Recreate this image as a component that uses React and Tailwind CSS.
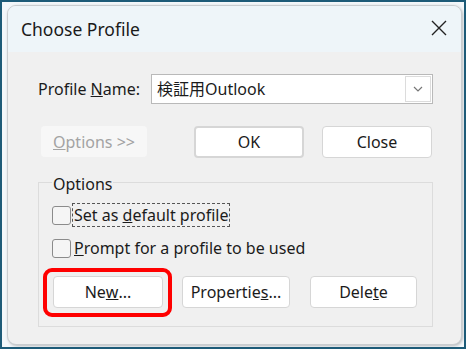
const font = { fontFamily: '"Noto Sans", "Noto Sans CJK JP", sans-serif' }

function Btn({ children, className = '' }) {
  return (
    <div
      className={`flex h-[32px] shrink-0 items-center justify-center rounded-[4px] border border-[#d6d6d6] bg-white text-[16px] text-[#1b1b1b] ${className}`}
    >
      {children}
    </div>
  )
}

function Check({ children, focused }) {
  return (
    <div className="flex h-[22px] items-center">
      <span className="h-[19px] w-[19px] rounded-[3px] border-[1.5px] border-[#8b8b8b] bg-[#f5f5f5]"></span>
      <span
        className={`ml-[2px] px-[1px] text-[16px] leading-[22px] text-[#1b1b1b] ${
          focused ? 'outline outline-1 outline-dashed outline-[#555]' : ''
        }`}
      >
        {children}
      </span>
    </div>
  )
}

export default function App() {
  return (
    <div
      className="h-[349px] w-[466px] overflow-hidden border-2 border-[#1d5b78] bg-[#f3f7fa] pl-[5px] pt-[3px]"
      style={font}
    >
      <div className="h-[340px] w-[455px] overflow-hidden rounded-[9px] border border-[#c9cdd0] bg-[#f0f0f0] shadow-[1px_1px_3px_rgba(0,0,0,0.25)]">
        {/* title bar */}
        <div className="flex h-[46px] items-center justify-between bg-[#eef5f9] pl-[13px] pr-[14px]">
          <span className="text-[17.5px] text-[#1a1a1a]">Choose Profile</span>
          <svg width="16" height="16" viewBox="0 0 16 16" className="mt-[-2px]">
            <path d="M1 1L15 15M15 1L1 15" stroke="#222" strokeWidth="1.4" />
          </svg>
        </div>

        <div className="pl-[30px] pt-[22px]">
          {/* profile name */}
          <div className="flex h-[30px] items-center">
            <span className="w-[113px] text-[16px] text-[#1b1b1b]">
              Profile <u>N</u>ame:
            </span>
            <div className="flex h-[30px] w-[282px] items-center justify-between border border-[#b9b9b9] bg-white pl-[5px] pr-[1px]">
              <span className="text-[16px] text-[#1b1b1b]">検証用Outlook</span>
              <div className="flex h-[26px] w-[26px] items-center justify-center border border-[#dcdcdc] bg-white">
                <svg width="10" height="6" viewBox="0 0 10 6">
                  <path d="M1 1L5 5L9 1" stroke="#777" strokeWidth="1.2" fill="none" />
                </svg>
              </div>
            </div>
          </div>

          {/* action buttons */}
          <div className="mt-[22px] flex h-[32px]">
            <div className="ml-[3px] flex h-[31px] w-[106px] items-center justify-center rounded-[4px] bg-[#f7f7f7] text-[16px] text-[#a3a3a3]">
              <u>O</u>ptions &gt;&gt;
            </div>
            <Btn className="ml-[47px] w-[110px] border-2 border-[#6ea7dc]">OK</Btn>
            <Btn className="ml-[18px] w-[110px]">Close</Btn>
          </div>

          {/* group box */}
          <div className="mt-[24px] h-[145px] w-[395px] border border-[#dcdcdc] pl-[13px]">
            <div className="-mt-[9px] w-fit bg-[#f0f0f0] px-[1px] text-[16px] leading-[20px] text-[#1b1b1b]">
              Options
            </div>
            <div className="mt-[10px] flex flex-col gap-[11px]">
              <Check focused>
                Set as <u>d</u>efault profile
              </Check>
              <Check>
                <u>P</u>rompt for a profile to be used
              </Check>
            </div>
            <div className="mt-[9px] flex items-start">
              <div className="-ml-[9px] shrink-0 rounded-[9px] border-4 border-[#ff0000] pb-[5px] pl-[6px] pr-[5px] pt-[4px]">
                <Btn className="w-[110px]">
                  Ne<u>w</u>...
                </Btn>
              </div>
              <Btn className="ml-[10px] mt-[8px] w-[108px]">
                Propertie<u>s</u>...
              </Btn>
              <Btn className="ml-[20px] mt-[8px] w-[107px]">
                Dele<u>t</u>e
              </Btn>
            </div>
          </div>
        </div>
      </div>
    </div>
  )
}
